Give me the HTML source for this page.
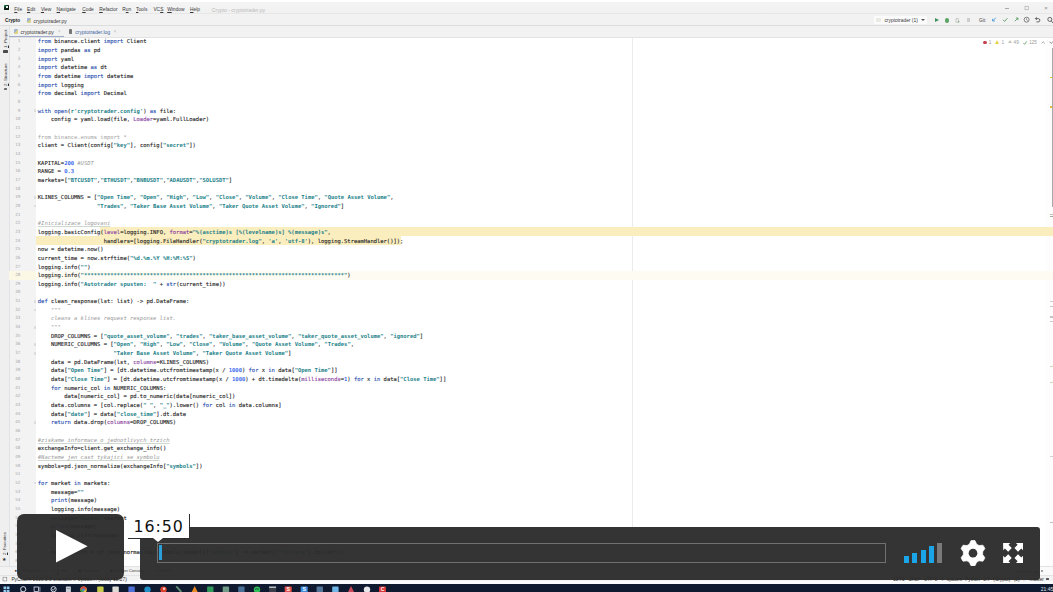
<!DOCTYPE html>
<html><head><meta charset="utf-8"><title>Crypto - cryptotrader.py</title>
<style>
html,body{margin:0;padding:0;background:#fff;}
body{width:1053px;height:592px;position:relative;overflow:hidden;font-family:"Liberation Sans",sans-serif;}
.abs{position:absolute;}
#ide{position:absolute;left:0;top:0;width:1053px;height:592px;overflow:hidden;}
/* chrome areas */
#titlebar{left:0;top:1.9px;width:1053px;height:12.1px;background:linear-gradient(#f4f4f4,#f1f1f1);border-bottom:.6px solid #e7e7e7;box-sizing:border-box}
#navbar{left:0;top:14px;width:1053px;height:11.1px;background:#f2f2f2;border-bottom:0.6px solid #dcdcdc;}
#tabs{left:0;top:25.6px;width:1053px;height:11.4px;background:#f2f2f2;border-bottom:0.8px solid #e3e3e3;}
#leftstrip{left:0;top:25.6px;width:8.5px;height:541px;background:#efefef;border-right:0.5px solid #e2e2e2;}
#gutter{left:9px;top:37.5px;width:27px;height:529px;background:#f3f3f3;}
#editor{left:35px;top:37.5px;width:1010px;height:529px;background:#fff;}
.t{position:absolute;font-size:4.9px;line-height:6px;color:#383838;white-space:nowrap;}
.m{top:6.7px;font-size:4.85px}
.vt{position:absolute;font-size:4.4px;line-height:5px;color:#333;white-space:nowrap;transform-origin:0 0;transform:rotate(-90deg);}
/* code */
.ln{position:absolute;left:37.8px;height:8.67px;line-height:8.67px;font-family:"DejaVu Sans Mono","Liberation Mono",monospace;font-size:5.48px;color:#262626;white-space:pre;-webkit-text-stroke:0.12px currentColor;}
.ln b{font-weight:normal}
.ln i{font-style:italic}
.no{position:absolute;left:9px;width:11.4px;text-align:right;height:8.67px;line-height:8.67px;font-family:"DejaVu Sans Mono","Liberation Mono",monospace;font-size:4.3px;color:#a9a9a9;}
.k{color:#2a50b0}.ln b.s{color:#1c7f8a;font-weight:bold;-webkit-text-stroke:0}.c{color:#999;-webkit-text-stroke:0;text-decoration:underline;text-decoration-color:#cfd8cf;text-decoration-thickness:.5px;text-underline-offset:.8px}.d{color:#999;-webkit-text-stroke:0}.n{color:#1750eb}.b{color:#2a50b0}.p{color:#8a3fa0}.u{color:#a2a2a2;-webkit-text-stroke:0}
.hl{position:absolute;left:35px;width:1010px;height:8.67px;background:#faedbe;}
/* player */
#play{left:17px;top:514px;width:107px;height:65.7px;border-radius:7px;background:rgba(43,43,43,.955);}
#bar{left:140.3px;top:527.3px;width:899.3px;height:52.4px;border-radius:3px;background:rgba(43,43,43,.955);}
#prog{left:156.9px;top:543.2px;width:729.3px;height:19.8px;box-sizing:border-box;border:1px solid #707070;}
#played{left:158.6px;top:545.2px;width:3px;height:14.9px;background:#2a9fd8;}
#tip{left:127.5px;top:513.2px;width:61.7px;height:25px;background:#fff;box-shadow:1px 1px 0 #2e2e2e,0 1px 0 #2e2e2e;font-family:"DejaVu Sans","Liberation Sans",sans-serif;font-size:15.8px;line-height:28.9px;color:#111;text-align:center;letter-spacing:1px;text-indent:.6px;overflow:hidden;}
#tipar{left:153px;top:538.1px;width:0;height:0;border-left:5.4px solid transparent;border-right:5.4px solid transparent;border-top:4.4px solid #fff;}
.vb{position:absolute;width:5.2px;background:#19a5e8;}
#taskbar{left:0;top:583.8px;width:1053px;height:9px;background:#0f1a31;}
#status{left:0;top:575px;width:1053px;height:8.8px;background:linear-gradient(#f2f2f2 0 50%,#fafbfd 60% 100%);border-top:0.5px solid #e4e4e4;}
#toolbar2{left:0;top:566px;width:1053px;height:9px;background:linear-gradient(90deg,#f2f2f2 0 95%,#fafafa 99%);border-top:0.5px solid #e2e2e2;}
.ti{position:absolute;top:586.2px;width:7px;height:7px;border-radius:1.2px;}
</style></head>
<body>
<div id="ide">
  <div id="titlebar" class="abs"></div>
  <div id="navbar" class="abs"></div>
  <div id="tabs" class="abs"></div>
  <div id="editor" class="abs"></div>
  <div id="gutter" class="abs"></div>
  <div id="leftstrip" class="abs"></div>

  <!-- title bar -->
  <div class="abs" style="left:3.7px;top:5.4px;width:5.4px;height:4.8px;background:linear-gradient(135deg,#1f8f5a,#0a1f14 45%,#0a1410);border-radius:.5px"></div>
  <div class="abs" style="left:5.8px;top:6.2px;width:2.6px;height:1.5px;background:#e6f7ea"></div>
  <div class="t m" style="left:14.3px"><u>F</u>ile</div>
  <div class="t m" style="left:27px"><u>E</u>dit</div>
  <div class="t m" style="left:40.9px"><u>V</u>iew</div>
  <div class="t m" style="left:56.6px"><u>N</u>avigate</div>
  <div class="t m" style="left:82.2px"><u>C</u>ode</div>
  <div class="t m" style="left:99.2px"><u>R</u>efactor</div>
  <div class="t m" style="left:122.3px">R<u>u</u>n</div>
  <div class="t m" style="left:136px"><u>T</u>ools</div>
  <div class="t m" style="left:153.4px">VC<u>S</u></div>
  <div class="t m" style="left:167.2px"><u>W</u>indow</div>
  <div class="t m" style="left:190px"><u>H</u>elp</div>
  <div class="t m" style="left:211.8px;color:#b8b8b8;font-size:5.1px">Crypto - cryptotrader.py</div>
  <!-- window controls -->
  <div class="abs" style="left:1005.2px;top:8px;width:4px;height:.5px;background:#aaa"></div>
  <svg class="abs" style="left:1023px;top:4px" width="8" height="8" viewBox="0 0 8 8"><rect x="2" y="2.2" width="3.6" height="3.6" fill="none" stroke="#9a9a9a" stroke-width=".5"/></svg>
  <div class="t" style="left:1044.2px;top:5px;font-size:6px;color:#8a8a8a">×</div>

  <!-- nav bar -->
  <div class="t" style="left:5px;top:17.8px;font-weight:bold;font-size:4.7px;color:#1a1a1a">Crypto</div>
  <div class="abs" style="left:27.2px;top:17.6px;width:4.2px;height:5px;background:linear-gradient(135deg,#9fb4cf 0 50%,#d9d08c 50% 100%);border-radius:1px"></div>
  <div class="t" style="left:33.5px;top:17.7px;font-size:5.05px">cryptotrader.py</div>
  <!-- run config -->
  <div class="abs" style="left:873.7px;top:15.8px;width:53.5px;height:8.4px;background:#fbfbfb;border-radius:1px"></div>
  <div class="abs" style="left:876.4px;top:17.8px;width:4.4px;height:4.6px;background:#e9e9e6;border-radius:1px"></div>
  <div class="t" style="left:884.4px;top:17.5px">cryptotrader (1)</div>
  <div class="abs" style="left:921.3px;top:19.2px;width:0;height:0;border-left:2px solid transparent;border-right:2px solid transparent;border-top:2.4px solid #555"></div>
  <div class="abs" style="left:934.6px;top:17.6px;width:0;height:0;border-top:2.4px solid transparent;border-bottom:2.4px solid transparent;border-left:4.2px solid #3f8f5c"></div>
  <div class="abs" style="left:944.7px;top:17.5px;width:4.8px;height:5px;background:#5aa563;border-radius:2.2px"></div>
  <svg class="abs" style="left:954px;top:16.6px" width="8" height="8" viewBox="0 0 8 8"><path d="M2 1.6 H4.4 V5.2 H2 Z" fill="none" stroke="#a9b3a9" stroke-width=".6"/><path d="M4 3.8 L6 4.8 L4 5.8 Z" fill="#8fae8f"/></svg>
  <div class="abs" style="left:966.6px;top:18.3px;width:3.4px;height:3.4px;background:#cdcdcd"></div>
  <div class="t" style="left:979px;top:17.5px;color:#444;font-size:4.7px">Git:</div>
  <svg class="abs" style="left:990.5px;top:16.3px" width="64" height="8" viewBox="0 0 64 8">
    <path d="M4.8 1.8 L1.6 5 M1.6 2.8 V5 H3.8" stroke="#4a94d6" stroke-width=".9" fill="none"/>
    <path d="M12 3.8 L13.6 5.4 L16.4 2.2" stroke="#5a9a62" stroke-width=".9" fill="none"/>
    <path d="M23.8 5.2 L26.8 2.2 M24.8 2 H26.9 V4.2" stroke="#5a9a62" stroke-width=".9" fill="none"/>
    <circle cx="35.6" cy="3.7" r="2.5" stroke="#555" stroke-width=".7" fill="none"/>
    <path d="M35.6 2.3 V3.8 L36.7 4.5" stroke="#555" stroke-width=".6" fill="none"/>
    <path d="M44.6 2.6 H47.2 A1.6 1.6 0 0 1 47.2 5.9 H45.4 M45.8 1.2 L44.4 2.6 L45.8 4" stroke="#444" stroke-width=".8" fill="none"/>
    <circle cx="58.8" cy="3.4" r="2" stroke="#444" stroke-width=".8" fill="none"/>
    <path d="M60.2 5 L62 6.8" stroke="#444" stroke-width=".9"/>
  </svg>

  <!-- tabs -->
  
  <div class="abs" style="left:9px;top:36px;width:55px;height:1px;background:#9fadc9"></div>
  <div class="abs" style="left:13.8px;top:29.3px;width:4.2px;height:5px;background:linear-gradient(135deg,#9fb4cf 0 50%,#e0d27c 50% 100%);border-radius:1px"></div>
  <div class="t" style="left:20.5px;top:29.1px;font-size:5.05px">cryptotrader.py</div>
  <div class="t" style="left:57.8px;top:29px;color:#c2c2c2">×</div>
  <div class="abs" style="left:68.6px;top:29px;width:3.4px;height:5px;background:#777;border-radius:.4px"></div>
  <div class="t" style="left:75.2px;top:29.1px;font-size:5.08px;color:#3d5f9e">cryptotrader.log</div>
  <div class="t" style="left:113.6px;top:29px;color:#c2c2c2">×</div>

  <!-- left strip -->
  <div class="vt" style="left:3.2px;top:47.5px"><u>1</u>: Project</div>
  <div class="abs" style="left:3px;top:49.6px;width:4.6px;height:3.4px;background:#4a4a4a;border-radius:.4px"></div>
  <div class="vt" style="left:3.2px;top:86px"><u>2</u>: Structure</div>
  <div class="abs" style="left:4px;top:87.6px;width:3.2px;height:2.6px;background:#6a6a6a;border-radius:.4px"></div>
  <div class="vt" style="left:2.4px;top:554.5px"><u>2</u>: Favorites</div>
  <div class="t" style="left:2.2px;top:555.5px;font-size:5.4px;color:#333">★</div>

  <div class="abs" style="left:1045.5px;top:37.5px;width:7.5px;height:529px;background:#fdfdfd"></div>
  <div class="abs" style="left:632px;top:37.5px;width:.8px;height:529px;background:#ebebeb"></div>
  <!-- highlights -->
  <div class="hl" style="top:227.2px;height:8.9px;left:100.4px;width:952.6px"></div>
  <div class="hl" style="top:236px;height:8.7px;left:36px;width:365px"></div>
  <div class="abs" style="left:9px;top:271.1px;width:27px;height:8.67px;background:#fbf8e6"></div>
  <div class="abs" style="left:36px;top:271.1px;width:1017px;height:8.67px;background:#fefcf2"></div>

  <!-- inspection widget -->
  <div class="abs" style="left:983.4px;top:40.6px;width:3.6px;height:3.6px;border-radius:50%;background:#c2434f"></div>
  <div class="t" style="left:988.8px;top:39.6px;font-size:4.6px;color:#9a8a8a">1</div>
  <div class="abs" style="left:994.9px;top:40.1px;width:0;height:0;border-left:2.6px solid transparent;border-right:2.6px solid transparent;border-bottom:4.4px solid #e6d248"></div>
  <div class="t" style="left:1001.4px;top:39.6px;font-size:4.6px;color:#9a9ab0">1</div>
  <div class="abs" style="left:1007.8px;top:40.4px;width:0;height:0;border-left:2.2px solid transparent;border-right:2.2px solid transparent;border-bottom:3.8px solid #c4c4b8"></div>
  <div class="t" style="left:1013.6px;top:39.6px;font-size:4.6px;color:#9a9a9a">49</div>
  <svg class="abs" style="left:1021.5px;top:39.8px" width="6" height="6" viewBox="0 0 6 6"><path d="M1.4 3 L2.6 4.3 L4.8 1.4" stroke="#6f9f74" stroke-width=".9" fill="none"/></svg>
  <div class="t" style="left:1029.2px;top:39.6px;font-size:4.6px;color:#9a9a9a">125</div>
  <svg class="abs" style="left:1040px;top:40px" width="14" height="5" viewBox="0 0 14 5"><path d="M1.6 3.4 L3.2 1.8 L4.8 3.4" stroke="#888" stroke-width=".7" fill="none"/><path d="M9.6 1.8 L11.2 3.4 L12.8 1.8" stroke="#666" stroke-width=".8" fill="none"/></svg>

  <!-- right scrollbar strip -->
  <div class="abs" style="left:1052px;top:48.4px;width:1px;height:159px;background:#a8a8a8"></div>
  <div class="abs" style="left:1049.5px;top:76.5px;width:2.5px;height:1px;background:#e8c63a"></div>
  <div class="abs" style="left:1049.5px;top:106.3px;width:2.8px;height:1.6px;background:#e8b93a"></div>
  <div class="abs" style="left:1049.5px;top:213.6px;width:3.5px;height:.8px;background:#b9c2b0"></div>
  <div class="abs" style="left:1049.5px;top:216.3px;width:3.5px;height:.8px;background:#9fae9a"></div>
  <div class="abs" style="left:1049.5px;top:300.6px;width:3.5px;height:.7px;background:#cfcfcf"></div>
  <div class="abs" style="left:1049.5px;top:305.6px;width:3.5px;height:.7px;background:#c8c8c8"></div>
  <div class="abs" style="left:1049.5px;top:316.4px;width:3.5px;height:1.2px;background:#c4c4c4"></div>
  <div class="abs" style="left:1050px;top:321px;width:3px;height:1.2px;background:#cdcdcd"></div>

  <div class="abs" style="left:1049.5px;top:366px;width:3.5px;height:.7px;background:#d6d2bc"></div>
  <div class="abs" style="left:1049.5px;top:382px;width:3.5px;height:.7px;background:#d6d2bc"></div>
  <div class="abs" style="left:1049.5px;top:456px;width:3.5px;height:.7px;background:#d2d2d2"></div>
  <div class="abs" style="left:1049.5px;top:522px;width:3.5px;height:.9px;background:#bdbdbd"></div>
  <!-- line numbers + code -->
<div class="no" style="top:37.40px">1</div>
<div class="no" style="top:46.06px">2</div>
<div class="no" style="top:54.72px">3</div>
<div class="no" style="top:63.37px">4</div>
<div class="no" style="top:72.03px">5</div>
<div class="no" style="top:80.69px">6</div>
<div class="no" style="top:89.35px">7</div>
<div class="no" style="top:98.01px">8</div>
<div class="no" style="top:106.66px">9</div>
<div class="no" style="top:115.32px">10</div>
<div class="no" style="top:123.98px">11</div>
<div class="no" style="top:132.64px">12</div>
<div class="no" style="top:141.30px">13</div>
<div class="no" style="top:149.95px">14</div>
<div class="no" style="top:158.61px">15</div>
<div class="no" style="top:167.27px">16</div>
<div class="no" style="top:175.93px">17</div>
<div class="no" style="top:184.59px">18</div>
<div class="no" style="top:193.24px">19</div>
<div class="no" style="top:201.90px">20</div>
<div class="no" style="top:210.56px">21</div>
<div class="no" style="top:219.22px">22</div>
<div class="no" style="top:227.88px">23</div>
<div class="no" style="top:236.53px">24</div>
<div class="no" style="top:245.19px">25</div>
<div class="no" style="top:253.85px">26</div>
<div class="no" style="top:262.51px">27</div>
<div class="no" style="top:271.17px">28</div>
<div class="no" style="top:279.82px">29</div>
<div class="no" style="top:288.48px">30</div>
<div class="no" style="top:297.14px">31</div>
<div class="no" style="top:305.80px">32</div>
<div class="no" style="top:314.46px">33</div>
<div class="no" style="top:323.11px">34</div>
<div class="no" style="top:331.77px">35</div>
<div class="no" style="top:340.43px">36</div>
<div class="no" style="top:349.09px">37</div>
<div class="no" style="top:357.75px">38</div>
<div class="no" style="top:366.40px">39</div>
<div class="no" style="top:375.06px">40</div>
<div class="no" style="top:383.72px">41</div>
<div class="no" style="top:392.38px">42</div>
<div class="no" style="top:401.04px">43</div>
<div class="no" style="top:409.69px">44</div>
<div class="no" style="top:418.35px">45</div>
<div class="no" style="top:427.01px">46</div>
<div class="no" style="top:435.67px">47</div>
<div class="no" style="top:444.33px">48</div>
<div class="no" style="top:452.98px">49</div>
<div class="no" style="top:461.64px">50</div>
<div class="no" style="top:470.30px">51</div>
<div class="no" style="top:478.96px">52</div>
<div class="no" style="top:487.62px">53</div>
<div class="no" style="top:496.27px">54</div>
<div class="no" style="top:504.93px">55</div>
<div class="no" style="top:513.59px">56</div>
<div class="no" style="top:522.25px">57</div>
<div class="no" style="top:530.91px">58</div>
<div class="no" style="top:539.56px">59</div>
<div class="no" style="top:548.22px">60</div>
<div class="no" style="top:556.88px">61</div>
<div class="no" style="top:565.54px">62</div>
<div class="abs" style="left:34.1px;top:109.49px;width:2.4px;height:2.6px;box-sizing:border-box;border:.5px solid #dcdcdc;background:#fcfcfc;border-radius:.5px"></div>
<div class="abs" style="left:34.1px;top:196.07px;width:2.4px;height:2.6px;box-sizing:border-box;border:.5px solid #dcdcdc;background:#fcfcfc;border-radius:.5px"></div>
<div class="abs" style="left:34.1px;top:204.73px;width:2.4px;height:2.6px;box-sizing:border-box;border:.5px solid #dcdcdc;background:#fcfcfc;border-radius:.5px"></div>
<div class="abs" style="left:34.1px;top:299.97px;width:2.4px;height:2.6px;box-sizing:border-box;border:.5px solid #dcdcdc;background:#fcfcfc;border-radius:.5px"></div>
<div class="abs" style="left:34.1px;top:308.63px;width:2.4px;height:2.6px;box-sizing:border-box;border:.5px solid #dcdcdc;background:#fcfcfc;border-radius:.5px"></div>
<div class="abs" style="left:34.1px;top:325.94px;width:2.4px;height:2.6px;box-sizing:border-box;border:.5px solid #dcdcdc;background:#fcfcfc;border-radius:.5px"></div>
<div class="abs" style="left:34.1px;top:343.26px;width:2.4px;height:2.6px;box-sizing:border-box;border:.5px solid #dcdcdc;background:#fcfcfc;border-radius:.5px"></div>
<div class="abs" style="left:34.1px;top:351.92px;width:2.4px;height:2.6px;box-sizing:border-box;border:.5px solid #dcdcdc;background:#fcfcfc;border-radius:.5px"></div>
<div class="abs" style="left:34.1px;top:421.18px;width:2.4px;height:2.6px;box-sizing:border-box;border:.5px solid #dcdcdc;background:#fcfcfc;border-radius:.5px"></div>
<div class="abs" style="left:34.1px;top:481.79px;width:2.4px;height:2.6px;box-sizing:border-box;border:.5px solid #dcdcdc;background:#fcfcfc;border-radius:.5px"></div>

<div class="ln" style="top:37.40px"><b class="k">from</b> binance.client <b class="k">import</b> Client</div>
<div class="ln" style="top:46.06px"><b class="k">import</b> pandas <b class="k">as</b> pd</div>
<div class="ln" style="top:54.72px"><b class="k">import</b> yaml</div>
<div class="ln" style="top:63.37px"><b class="k">import</b> datetime <b class="k">as</b> dt</div>
<div class="ln" style="top:72.03px"><b class="k">from</b> datetime <b class="k">import</b> datetime</div>
<div class="ln" style="top:80.69px"><b class="k">import</b> logging</div>
<div class="ln" style="top:89.35px"><b class="k">from</b> decimal <b class="k">import</b> Decimal</div>
<div class="ln" style="top:98.01px">&nbsp;</div>
<div class="ln" style="top:106.66px"><b class="k">with</b> <span class="b">open</span>(<b class="s">r&#x27;cryptotrader.config&#x27;</b>) <b class="k">as</b> file:</div>
<div class="ln" style="top:115.32px">    config = yaml.load(file, <span class="p">Loader</span>=yaml.FullLoader)</div>
<div class="ln" style="top:123.98px">&nbsp;</div>
<div class="ln" style="top:132.64px"><span class="u">from binance.enums import *</span></div>
<div class="ln" style="top:141.30px">client = Client(config[<b class="s">&quot;key&quot;</b>], config[<b class="s">&quot;secret&quot;</b>])</div>
<div class="ln" style="top:149.95px">&nbsp;</div>
<div class="ln" style="top:158.61px">KAPITAL=<span class="n">200</span> <i class="d">#USDT</i></div>
<div class="ln" style="top:167.27px">RANGE = <span class="n">0.3</span></div>
<div class="ln" style="top:175.93px">markets=[<b class="s">&quot;BTCUSDT&quot;</b>,<b class="s">&quot;ETHUSDT&quot;</b>,<b class="s">&quot;BNBUSDT&quot;</b>,<b class="s">&quot;ADAUSDT&quot;</b>,<b class="s">&quot;SOLUSDT&quot;</b>]</div>
<div class="ln" style="top:184.59px">&nbsp;</div>
<div class="ln" style="top:193.24px">KLINES_COLUMNS = [<b class="s">&quot;Open Time&quot;</b>, <b class="s">&quot;Open&quot;</b>, <b class="s">&quot;High&quot;</b>, <b class="s">&quot;Low&quot;</b>, <b class="s">&quot;Close&quot;</b>, <b class="s">&quot;Volume&quot;</b>, <b class="s">&quot;Close Time&quot;</b>, <b class="s">&quot;Quote Asset Volume&quot;</b>,</div>
<div class="ln" style="top:201.90px">                  <b class="s">&quot;Trades&quot;</b>, <b class="s">&quot;Taker Base Asset Volume&quot;</b>, <b class="s">&quot;Taker Quote Asset Volume&quot;</b>, <b class="s">&quot;Ignored&quot;</b>]</div>
<div class="ln" style="top:210.56px">&nbsp;</div>
<div class="ln" style="top:219.22px"><i class="c">#Inicializace logovani</i></div>
<div class="ln" style="top:227.88px">logging.basicConfig(<span class="p">level</span>=logging.INFO, <span class="p">format</span>=<b class="s">&quot;%(asctime)s [%(levelname)s] %(message)s&quot;</b>,</div>
<div class="ln" style="top:236.53px">                    handlers=[logging.FileHandler(<b class="s">&quot;cryptotrader.log&quot;</b>, <b class="s">&#x27;a&#x27;</b>, <b class="s">&#x27;utf-8&#x27;</b>), logging.StreamHandler()]);</div>
<div class="ln" style="top:245.19px">now = datetime.now()</div>
<div class="ln" style="top:253.85px">current_time = now.strftime(<b class="s">&quot;%d.%m.%Y %H:%M:%S&quot;</b>)</div>
<div class="ln" style="top:262.51px">logging.info(<b class="s">&quot;&quot;</b>)</div>
<div class="ln" style="top:271.17px">logging.info(<b class="s">&quot;*******************************************************************************&quot;</b>)</div>
<div class="ln" style="top:279.82px">logging.info(<b class="s">&quot;Autotrader spusten:  &quot;</b> + <span class="b">str</span>(current_time))</div>
<div class="ln" style="top:288.48px">&nbsp;</div>
<div class="ln" style="top:297.14px"><b class="k">def</b> clean_response(lst: list) -&gt; pd.DataFrame:</div>
<div class="ln" style="top:305.80px"><i class="d">    &quot;&quot;&quot;</i></div>
<div class="ln" style="top:314.46px"><i class="d">    cleans a klines request response list.</i></div>
<div class="ln" style="top:323.11px"><i class="d">    &quot;&quot;&quot;</i></div>
<div class="ln" style="top:331.77px">    DROP_COLUMNS = [<b class="s">&quot;quote_asset_volume&quot;</b>, <b class="s">&quot;trades&quot;</b>, <b class="s">&quot;taker_base_asset_volume&quot;</b>, <b class="s">&quot;taker_quote_asset_volume&quot;</b>, <b class="s">&quot;ignored&quot;</b>]</div>
<div class="ln" style="top:340.43px">    NUMERIC_COLUMNS = [<b class="s">&quot;Open&quot;</b>, <b class="s">&quot;High&quot;</b>, <b class="s">&quot;Low&quot;</b>, <b class="s">&quot;Close&quot;</b>, <b class="s">&quot;Volume&quot;</b>, <b class="s">&quot;Quote Asset Volume&quot;</b>, <b class="s">&quot;Trades&quot;</b>,</div>
<div class="ln" style="top:349.09px">                       <b class="s">&quot;Taker Base Asset Volume&quot;</b>, <b class="s">&quot;Taker Quote Asset Volume&quot;</b>]</div>
<div class="ln" style="top:357.75px">    data = pd.DataFrame(lst, <span class="p">columns</span>=KLINES_COLUMNS)</div>
<div class="ln" style="top:366.40px">    data[<b class="s">&quot;Open Time&quot;</b>] = [dt.datetime.utcfromtimestamp(x / <span class="n">1000</span>) <b class="k">for</b> x <b class="k">in</b> data[<b class="s">&quot;Open Time&quot;</b>]]</div>
<div class="ln" style="top:375.06px">    data[<b class="s">&quot;Close Time&quot;</b>] = [dt.datetime.utcfromtimestamp(x / <span class="n">1000</span>) + dt.timedelta(<span class="p">milliseconds</span>=<span class="n">1</span>) <b class="k">for</b> x <b class="k">in</b> data[<b class="s">&quot;Close Time&quot;</b>]]</div>
<div class="ln" style="top:383.72px">    <b class="k">for</b> numeric_col <b class="k">in</b> NUMERIC_COLUMNS:</div>
<div class="ln" style="top:392.38px">        data[numeric_col] = pd.to_numeric(data[numeric_col])</div>
<div class="ln" style="top:401.04px">    data.columns = [col.replace(<b class="s">&quot; &quot;</b>, <b class="s">&quot;_&quot;</b>).lower() <b class="k">for</b> col <b class="k">in</b> data.columns]</div>
<div class="ln" style="top:409.69px">    data[<b class="s">&quot;date&quot;</b>] = data[<b class="s">&quot;close_time&quot;</b>].dt.date</div>
<div class="ln" style="top:418.35px">    <b class="k">return</b> data.drop(<span class="p">columns</span>=DROP_COLUMNS)</div>
<div class="ln" style="top:427.01px">&nbsp;</div>
<div class="ln" style="top:435.67px"><i class="c">#ziskame informace o jednotlivych trzich</i></div>
<div class="ln" style="top:444.33px">exchangeInfo=client.get_exchange_info()</div>
<div class="ln" style="top:452.98px"><i class="c">#Nacteme jen cast tykajici se symbolu</i></div>
<div class="ln" style="top:461.64px">symbols=pd.json_normalize(exchangeInfo[<b class="s">&quot;symbols&quot;</b>])</div>
<div class="ln" style="top:470.30px">&nbsp;</div>
<div class="ln" style="top:478.96px"><b class="k">for</b> market <b class="k">in</b> markets:</div>
<div class="ln" style="top:487.62px">    message=<b class="s">&quot;&quot;</b></div>
<div class="ln" style="top:496.27px">    <span class="b">print</span>(message)</div>
<div class="ln" style="top:504.93px">    logging.info(message)</div>
<div class="ln" style="top:513.59px">    message=<b class="s">&quot;Market&quot;</b>+market</div>
<div class="ln" style="top:522.25px">    <span class="b">print</span>(message)</div>
<div class="ln" style="top:530.91px">    logging.info(message)</div>
<div class="ln" style="top:539.56px">&nbsp;</div>
<div class="ln" style="top:548.22px">    market_info = pd.json_normalize(symbols[symbols[<b class="s">&quot;symbol&quot;</b>] == market][<b class="s">&quot;filters&quot;</b>].tolist())</div>
<div class="ln" style="top:556.88px">&nbsp;</div>
<div class="ln" style="top:565.54px">    tick_size = Decimal(filters[<b class="s">&quot;tickSize&quot;</b>][<span class="n">0</span>])</div>


  <!-- bottom tool window bar + status bar -->
  <div id="toolbar2" class="abs"></div>
  <div class="t" style="left:14.5px;top:568px;font-size:4.3px;color:#3a3a3a">● <u>6</u>: Problems</div>
  <div class="t" style="left:52.5px;top:568px;font-size:4.3px;color:#3a3a3a">⑂ <u>9</u>: Git</div>
  <div class="t" style="left:78px;top:568px;font-size:4.3px;color:#3a3a3a">▣ Terminal</div>
  <div class="t" style="left:110px;top:568px;font-size:4.3px;color:#3a3a3a">◆ Python Console</div>
  <div class="t" style="left:155px;top:568px;font-size:4.3px;color:#3a3a3a">≡ TODO</div>
  <div class="t" style="left:1015px;top:568.6px;font-size:4.3px;color:#3a3a3a">● Event Log</div>
  <div id="status" class="abs"></div>
  <svg class="abs" style="left:2px;top:576.4px" width="7" height="7" viewBox="0 0 7 7"><rect x="1" y="1.2" width="3.8" height="3.8" fill="none" stroke="#7a7a7a" stroke-width=".55"/></svg>
  <div class="t" style="left:11.4px;top:576.8px;font-size:4.84px;color:#333">PyCharm 2020.2.5 available // Update... (today 18:27)</div>
  <div class="t" style="left:893px;top:576.8px;font-size:4.7px;color:#333;word-spacing:2.2px">18:73 CRLF UTF-8 4&nbsp;spaces Python&nbsp;3.7&nbsp;(Crypto)&nbsp;(2) ᚶ&nbsp;master</div>

  <div class="abs" style="left:1040.6px;top:570.2px;width:2.2px;height:2px;background:#8a8a8a;border-radius:1px"></div>
  <div class="abs" style="left:1046px;top:577.6px;width:3px;height:2.6px;background:#555;border-radius:.6px"></div>
  <!-- taskbar -->
  <div id="taskbar" class="abs"></div>
<svg class="abs" style="left:0;top:585px" width="400" height="7" viewBox="0 585 400 7">
<path d="M3.5 586.4h2.7v2.7h-2.7zM6.8 586.4h2.7v2.7h-2.7zM3.5 589.7h2.7v2.7h-2.7zM6.8 589.7h2.7v2.7h-2.7z" fill="#8fc8ee"/>
<circle cx="23.2" cy="589.2" r="2.6" fill="none" stroke="#e9eef5" stroke-width=".9"/><path d="M21.4 591.2l-2.2 2.2" stroke="#e9eef5" stroke-width="1"/>
<rect x="34.1" y="587.0" width="4.4" height="4.6" fill="none" stroke="#d6dde8" stroke-width=".8"/><path d="M39.9 586.8v5" stroke="#d6dde8" stroke-width=".7"/>
<circle cx="53.6" cy="589.2" r="2.6" fill="none" stroke="#dfe6ee" stroke-width=".9"/><path d="M52.2 589.2l1 1.1l2-2.4" stroke="#dfe6ee" stroke-width=".8" fill="none"/>
<rect x="65.9" y="586.4" width="5" height="6" rx=".6" fill="#c9ced6"/><rect x="66.7" y="588.0" width="3.4" height="1" fill="#8f97a6"/>
<circle cx="83.6" cy="589.6" r="3.2" fill="#e6c341"/><path d="M80.4 589.6a3.2 3.2 0 0 1 6.4 0z" fill="#d9483a"/><path d="M80.4 589.6a3.2 3.2 0 0 0 3.2 3.2v-3.2z" fill="#3f9d52"/><circle cx="83.6" cy="589.6" r="1.3" fill="#4a82e0"/>
<rect x="97.2" y="586.6" width="6.4" height="6" rx=".8" fill="#c9cc4a"/>
<rect x="112.4" y="586.6" width="6.4" height="6" rx=".8" fill="#dcdcd4"/>
<rect x="128.4" y="586.6" width="6.4" height="6" rx=".8" fill="#4d6fd6"/>
<circle cx="147.5" cy="589.6" r="3.2" fill="#1f8fc6"/>
<circle cx="163.5" cy="589.6" r="3.2" fill="#d9402e"/><circle cx="164.1" cy="588.8" r="1.2" fill="#f4d0c8"/>
<path d="M176.3 586.4l5 5.6" stroke="#5d8a72" stroke-width="2"/>
<path d="M194.7 586.0l3.2 6.4h-6.4z" fill="#e98a23"/>
<rect x="207.1" y="586.6" width="6.4" height="6" rx=".8" fill="#2f9a5a"/>
<rect x="222.7" y="586.6" width="6.4" height="6" rx=".8" fill="#6f9a86"/>
<rect x="238.2" y="586.6" width="6.4" height="6" rx=".8" fill="#4a6f96"/>
<circle cx="257.0" cy="589.6" r="3.2" fill="#2fc25a"/><path d="M255.0 589.2q2-.8 4 0" stroke="#0f1a33" stroke-width=".7" fill="none"/>
<rect x="269.1" y="586.6" width="7" height="6" fill="#3a3f4a"/><rect x="269.1" y="586.6" width="7" height="1.2" fill="#d8dce4"/>
<rect x="284.7" y="586.4" width="7" height="6" rx=".8" fill="#e0524a"/><text x="288.2" y="591.3" font-family="Liberation Sans,sans-serif" font-weight="bold" font-size="5.2" fill="#fff" text-anchor="middle">S</text>
<rect x="300.7" y="586.4" width="7" height="6" rx=".8" fill="#3f8fe0"/><text x="304.2" y="591.3" font-family="Liberation Sans,sans-serif" font-weight="bold" font-size="5.2" fill="#fff" text-anchor="middle">S</text>
<rect x="316.6" y="586.6" width="6.4" height="6" rx=".8" fill="#54749a"/>
<rect x="332.2" y="586.6" width="6.4" height="6" rx=".8" fill="#6fb6e6"/>
<path d="M351.0 586.0l3.2 6.4h-6.4z" fill="#c94a5a"/>
<circle cx="367.0" cy="589.6" r="3.2" fill="#e6e6ea"/>
<rect x="379.0" y="586.4" width="7" height="6" rx=".8" fill="#d9363a"/><text x="382.5" y="591.3" font-family="Liberation Sans,sans-serif" font-weight="bold" font-size="5.2" fill="#fff" text-anchor="middle">C</text>
</svg>

  <div class="t" style="left:1040.8px;top:586.4px;font-size:5px;color:#dfe3ea">21:45</div>
</div>

<!-- video player overlay -->
<div id="play" class="abs"></div>
<svg class="abs" style="left:56.4px;top:530.2px" width="32" height="33" viewBox="0 0 32 33"><path d="M0 0 L31.6 16.3 L0 32.6 Z" fill="#fff"/></svg>
<div id="bar" class="abs"></div>
<div id="prog" class="abs"></div>
<div id="played" class="abs"></div>
<div id="tip" class="abs">16:50</div>
<div id="tipar" class="abs"></div>
<div class="vb" style="left:903.9px;top:556.1px;height:6.5px"></div>
<div class="vb" style="left:912.2px;top:553px;height:9.6px"></div>
<div class="vb" style="left:920.6px;top:549.9px;height:12.7px"></div>
<div class="vb" style="left:929px;top:546.1px;height:16.5px"></div>
<div class="vb" style="left:937.1px;top:542.6px;height:20px;background:#7a7a7a"></div>
<!-- gear -->
<svg class="abs" style="left:960.4px;top:539.8px" width="26" height="26.4" viewBox="-13 -13.2 26 26.4">
  <path d="M-3.63 -8.99 L-1.99 -12.59 A12.75 12.75 0 0 1 1.99 -12.59 L3.63 -8.99 A9.70 9.70 0 0 1 5.97 -7.64 L9.91 -8.02 A12.75 12.75 0 0 1 11.90 -4.57 L9.61 -1.35 A9.70 9.70 0 0 1 9.61 1.35 L11.90 4.57 A12.75 12.75 0 0 1 9.91 8.02 L5.97 7.64 A9.70 9.70 0 0 1 3.63 8.99 L1.99 12.59 A12.75 12.75 0 0 1 -1.99 12.59 L-3.63 8.99 A9.70 9.70 0 0 1 -5.97 7.64 L-9.91 8.02 A12.75 12.75 0 0 1 -11.90 4.57 L-9.61 1.35 A9.70 9.70 0 0 1 -9.61 -1.35 L-11.90 -4.57 A12.75 12.75 0 0 1 -9.91 -8.02 L-5.97 -7.64 A9.70 9.70 0 0 1 -3.63 -8.99 Z" fill="#fff" stroke="#fff" stroke-width="0.7" stroke-linejoin="round"/>
  <circle r="4.35" fill="#353535"/>
</svg>
<!-- fullscreen -->
<svg class="abs" style="left:1002.9px;top:542.9px" width="20.2" height="20" viewBox="0 0 12 12">
  <g fill="#fff">
    <polygon points="6,6 5.95,1.7 4.9,2.75 2.95,0.8 0.8,2.95 2.75,4.9 1.7,5.95" transform="translate(6,6)"/>
    <polygon points="6,6 5.95,1.7 4.9,2.75 2.95,0.8 0.8,2.95 2.75,4.9 1.7,5.95" transform="translate(6,6) rotate(90)"/>
    <polygon points="6,6 5.95,1.7 4.9,2.75 2.95,0.8 0.8,2.95 2.75,4.9 1.7,5.95" transform="translate(6,6) rotate(180)"/>
    <polygon points="6,6 5.95,1.7 4.9,2.75 2.95,0.8 0.8,2.95 2.75,4.9 1.7,5.95" transform="translate(6,6) rotate(270)"/>
  </g>
</svg>
</body></html>
